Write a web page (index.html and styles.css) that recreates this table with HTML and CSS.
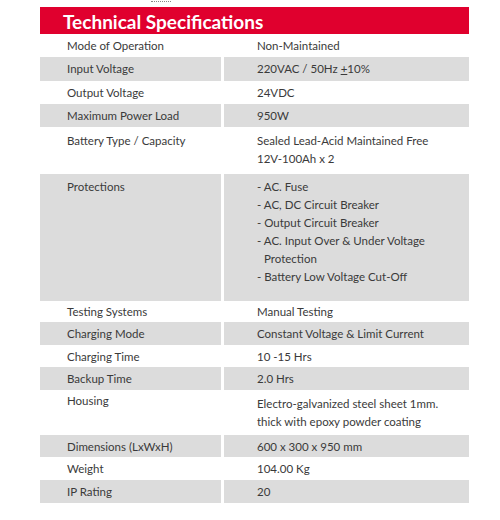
FILE: index.html
```html
<!DOCTYPE html>
<html lang="en">
<head>
    <meta charset="UTF-8">
    <meta name="viewport" content="width=device-width, initial-scale=1.0">
    <title>Technical Specifications</title>
    <link rel="stylesheet" href="styles.css">
</head>
<body>

<div class="page">
    <div class="cut-caption"><div class="cut-mark"></div></div>

    <div class="spec-header">Technical Specifications</div>

    <div class="spec-table">
        <div class="spec-row">
            <div class="label">Mode of Operation</div>
            <div class="value">Non-Maintained</div>
        </div>
        <div class="spec-row shade tall1">
            <div class="label">Input Voltage</div>
            <div class="value">220VAC / 50Hz <u>+</u>10%</div>
        </div>
        <div class="spec-row">
            <div class="label">Output Voltage</div>
            <div class="value">24VDC</div>
        </div>
        <div class="spec-row shade">
            <div class="label">Maximum Power Load</div>
            <div class="value">950W</div>
        </div>
        <div class="spec-row multi battery">
            <div class="label">Battery Type / Capacity</div>
            <div class="value">Sealed Lead-Acid Maintained Free<br>12V-100Ah x 2</div>
        </div>
        <div class="spec-row shade multi protections">
            <div class="label">Protections</div>
            <div class="value">
                <div>- AC. Fuse</div>
                <div>- AC, DC Circuit Breaker</div>
                <div>- Output Circuit Breaker</div>
                <div>- AC. Input Over &amp; Under Voltage</div>
                <div class="indent">Protection</div>
                <div>- Battery Low Voltage Cut-Off</div>
            </div>
        </div>
        <div class="spec-row short">
            <div class="label">Testing Systems</div>
            <div class="value">Manual Testing</div>
        </div>
        <div class="spec-row shade">
            <div class="label">Charging Mode</div>
            <div class="value">Constant Voltage &amp; Limit Current</div>
        </div>
        <div class="spec-row short1">
            <div class="label">Charging Time</div>
            <div class="value">10 -15 Hrs</div>
        </div>
        <div class="spec-row shade">
            <div class="label">Backup Time</div>
            <div class="value">2.0 Hrs</div>
        </div>
        <div class="spec-row multi housing">
            <div class="label">Housing</div>
            <div class="value">Electro-galvanized steel sheet 1mm.<br>thick with epoxy powder coating</div>
        </div>
        <div class="spec-row shade short1">
            <div class="label">Dimensions (LxWxH)</div>
            <div class="value">600 x 300 x 950 mm</div>
        </div>
        <div class="spec-row">
            <div class="label">Weight</div>
            <div class="value">104.00 Kg</div>
        </div>
        <div class="spec-row shade">
            <div class="label">IP Rating</div>
            <div class="value">20</div>
        </div>
    </div>
</div>

</body>
</html>
```

FILE: styles.css
```css
body {
    margin: 0;
    background: #fff;
    font-family: Lato, "Open Sans", sans-serif;
    color: #3a3a3a;
}
.page {
    width: 429px;
    margin-left: 40px;
}
.cut-caption {
    height: 7px;
}
.cut-mark {
    margin-left: 111px;
    width: 20px;
    height: 2px;
    border-bottom: 1px dotted #888;
    box-sizing: border-box;
}
.spec-header {
    background-color: #e0002e;
    color: #fff;
    font-weight: 700;
    font-size: 19px;
    height: 27px;
    line-height: 29px;
    padding-left: 23px;
}
.spec-row {
    display: grid;
    grid-template-columns: 181px 245px;
    column-gap: 3px;
    font-size: 11.5px;
    line-height: 18px;
}
.spec-row .label,
.spec-row .value {
    height: 23px;
    padding-top: 3px;
    box-sizing: border-box;
}
.spec-row .label {
    padding-left: 27px;
}
.spec-row .value {
    padding-left: 33px;
}
.spec-row.shade .label,
.spec-row.shade .value {
    background-color: #dcdcdc;
}
.spec-row.tall1 .label,
.spec-row.tall1 .value {
    height: 24px;
}
.spec-row.short .label,
.spec-row.short .value {
    height: 21px;
    padding-top: 2px;
}
.spec-row.short1 .label,
.spec-row.short1 .value {
    height: 22px;
}
.spec-row.multi .label,
.spec-row.multi .value {
    padding-top: 5px;
}
.spec-row.battery .label,
.spec-row.battery .value {
    height: 47px;
}
.spec-row.protections .label,
.spec-row.protections .value {
    height: 127px;
    padding-top: 4px;
}
.spec-row.housing .label,
.spec-row.housing .value {
    height: 45px;
    padding-top: 2px;
}
.spec-row.housing .value {
    padding-top: 5px;
}
.value u {
    text-decoration-thickness: 1px;
}
.value .indent {
    padding-left: 7px;
}
```
